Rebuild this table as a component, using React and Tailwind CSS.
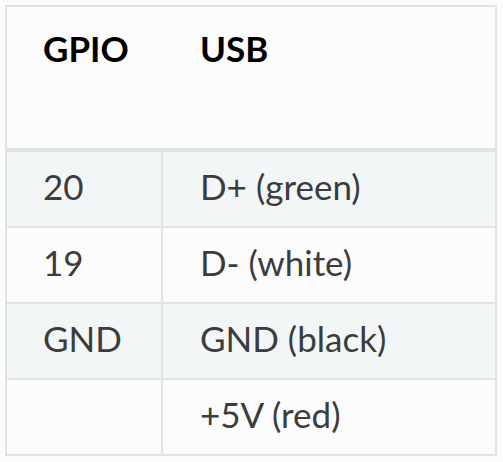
export default function App() {
  const rows = [
    ["20", "D+ (green)", true],
    ["19", "D- (white)", false],
    ["GND", "GND (black)", true],
    ["", "+5V (red)", false],
  ];
  return (
    <div
      className="w-[503px] h-[462px] bg-[#fcfcfc] pt-[5px] pl-[5px]"
      style={{ fontFamily: "Lato, 'Open Sans', sans-serif" }}
    >
      <div className="w-[492px] border-2 border-[#dfe3e4] bg-[#fcfcfc]">
        <div className="flex h-[145px] border-b-4 border-[#dfe3e4] text-[35px] leading-[42px] font-bold text-black">
          <div className="w-[156px] pl-[36px] pt-[20px]">GPIO</div>
          <div className="flex-1 pl-[37px] pt-[20px]">USB</div>
        </div>
        {rows.map(([a, b, striped], i) => (
          <div
            key={i}
            className={
              "flex text-[35px] leading-[42px] text-[#3c3c3c] " +
              (striped ? "bg-[#f3f6f7] " : "bg-[#fcfcfc] ") +
              (i > 0 ? "border-t-2 border-[#dfe3e4] h-[76px]" : "h-[74px]")
            }
          >
            <div className="w-[156px] pl-[36px] pt-[13px] border-r-2 border-[#dfe3e4]">
              {a}
            </div>
            <div className="flex-1 pl-[37px] pt-[13px]">{b}</div>
          </div>
        ))}
      </div>
    </div>
  );
}
